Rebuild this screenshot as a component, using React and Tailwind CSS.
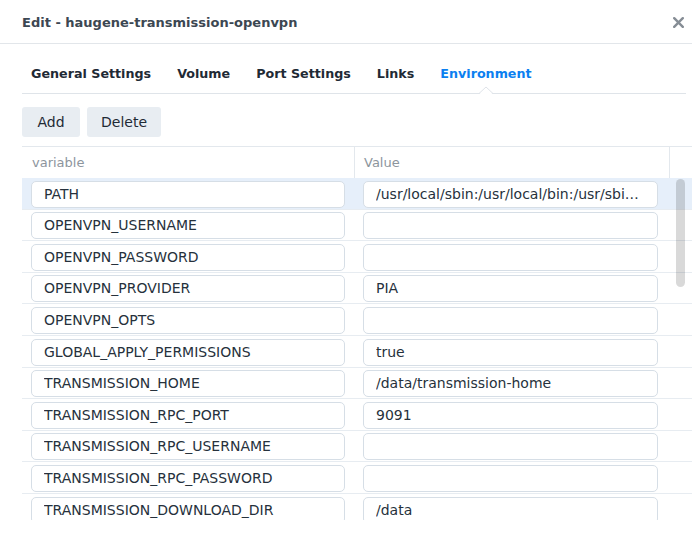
import React from "react";

const rows = [
  ["PATH", "/usr/local/sbin:/usr/local/bin:/usr/sbin:/usr/bin:/sbin:/bin"],
  ["OPENVPN_USERNAME", ""],
  ["OPENVPN_PASSWORD", ""],
  ["OPENVPN_PROVIDER", "PIA"],
  ["OPENVPN_OPTS", ""],
  ["GLOBAL_APPLY_PERMISSIONS", "true"],
  ["TRANSMISSION_HOME", "/data/transmission-home"],
  ["TRANSMISSION_RPC_PORT", "9091"],
  ["TRANSMISSION_RPC_USERNAME", ""],
  ["TRANSMISSION_RPC_PASSWORD", ""],
  ["TRANSMISSION_DOWNLOAD_DIR", "/data"],
];

const tabs = ["General Settings", "Volume", "Port Settings", "Links", "Environment"];

function Field({ value, className }) {
  return (
    <div
      className={
        "h-[27px] flex items-center rounded-[5px] border border-[#d6dee6] bg-white px-[12px] text-[14px] text-[#26313c] " +
        className
      }
    >
      <span className="truncate block w-full">{value}</span>
    </div>
  );
}

export default function App() {
  return (
    <div className="w-[692px] h-[545px] bg-white overflow-hidden font-['DejaVu_Sans',Verdana,sans-serif]">
      {/* title bar */}
      <div className="h-[44px] flex items-center justify-between border-b border-[#e2e6ea] pl-[22px] pr-[8px]">
        <div className="text-[13px] font-bold leading-4 text-[#3c4752] pt-[2px]">
          Edit - haugene-transmission-openvpn
        </div>
        <svg width="11" height="11" viewBox="0 0 11 11" className="mt-[1px]">
          <path d="M1.2 1.2 L9.8 9.8 M9.8 1.2 L1.2 9.8" stroke="#868d95" strokeWidth="2.4" strokeLinecap="round" />
        </svg>
      </div>

      {/* tabs */}
      <div className="h-[50px] ml-[22px] mr-[6px] border-b border-[#dfe4e9] flex items-stretch pl-[9px] gap-[26px]">
        {tabs.map((t) => {
          const active = t === "Environment";
          return (
            <div key={t} className="relative pt-[22px]">
              <div
                className={
                  "text-[12.7px] font-bold leading-4 " +
                  (active ? "text-[#0b7ff0]" : "text-[#1f2a35]")
                }
              >
                {t}
              </div>
              {active && (
                <svg
                  width="14"
                  height="8"
                  viewBox="0 0 14 8"
                  className="absolute bottom-[-1px] left-1/2 -translate-x-1/2"
                >
                  <polygon points="0.5,8 7,1.6 13.5,8" fill="#ffffff" />
                  <polyline points="0,7.5 7,1 14,7.5" fill="none" stroke="#dfe4e9" strokeWidth="1" />
                </svg>
              )}
            </div>
          );
        })}
      </div>

      {/* toolbar */}
      <div className="ml-[22px] mt-[13px] flex gap-[7px]">
        <button className="w-[58px] h-[30px] rounded-[3px] bg-[#e8edf2] text-[14px] text-[#1f2a35]">
          Add
        </button>
        <button className="w-[74px] h-[30px] rounded-[3px] bg-[#e8edf2] text-[14px] text-[#1f2a35]">
          Delete
        </button>
      </div>

      {/* table */}
      <div className="ml-[22px] mt-[9px] border-t border-[#e3e8ed]">
        <div className="h-[31px] flex text-[13px] text-[#8d959d]">
          <div className="w-[332px] flex items-center pl-[10px] pt-[1px]">variable</div>
          <div className="w-[315px] flex items-center pl-[9px] pt-[1px] border-l border-[#e3e8ed]">Value</div>
          <div className="flex-1 border-l border-[#e3e8ed]" />
        </div>
        <div className="relative h-[342px] overflow-hidden">
          {rows.map(([k, v], i) => (
            <div
              key={k}
              className={
                "h-[31.6px] flex items-start pt-[2.7px] border-b border-[#e7ecf1] " +
                (i === 0 ? "bg-[#e6effa]" : "")
              }
            >
              <div className="w-[332px] px-[9px]">
                <Field value={k} className="w-[314px]" />
              </div>
              <div className="pl-[9px]">
                <Field value={v} className="w-[295px]" />
              </div>
            </div>
          ))}
          <div className="absolute right-[7px] top-[1px] w-[9px] h-[108px] rounded-full bg-black/15" />
        </div>
      </div>
    </div>
  );
}
